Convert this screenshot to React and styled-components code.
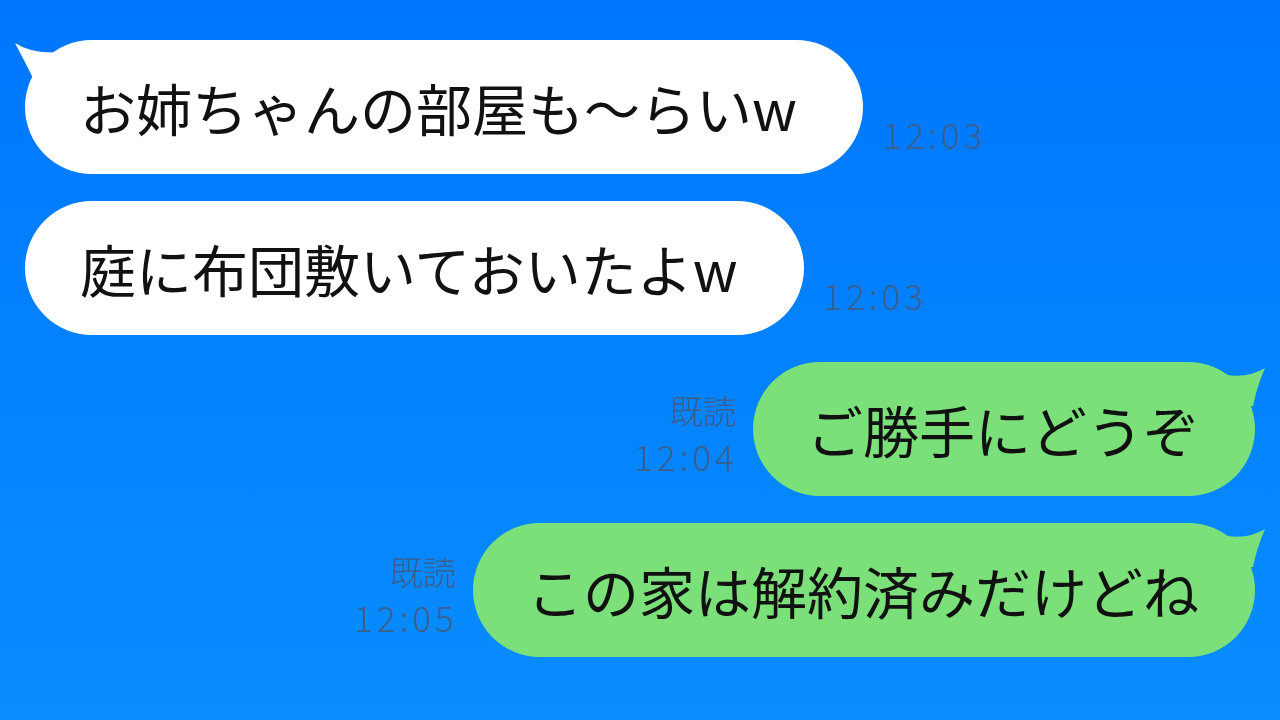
import styled, { createGlobalStyle } from "styled-components";

const GlobalStyle = createGlobalStyle`
  html, body {
    margin: 0;
    padding: 0;
  }
  body {
    width: 1280px;
    height: 720px;
    overflow: hidden;
  }
`;

const Screen = styled.div`
  width: 1280px;
  height: 720px;
  box-sizing: border-box;
  padding: 40px 25px 0;
  display: flex;
  flex-direction: column;
  gap: 27px;
  background: linear-gradient(180deg, #0077fe 0%, #0382ff 50%, #0a8dff 100%);
  font-family: "Noto Sans CJK JP", "Noto Sans", sans-serif;
`;

const Row = styled.div`
  display: flex;
  align-items: flex-end;
  justify-content: ${p => (p.$mine ? "flex-end" : "flex-start")};
  gap: ${p => (p.$mine ? "19px" : "20px")};
`;

const Bubble = styled.div`
  position: relative;
  height: 134px;
  box-sizing: border-box;
  display: flex;
  align-items: center;
  padding: ${p => (p.$mine ? "0 56px 0 54px" : "0 66px 0 55px")};
  border-radius: 67px;
  background: ${p => (p.$mine ? "#7be07a" : "#ffffff")};
  color: #111;
  font-size: 56px;
  line-height: 1;
  white-space: nowrap;
`;

const Tail = styled.svg`
  position: absolute;
  top: 0;
  ${p => (p.$mine ? "right: -10px;" : "left: -10px;")}
  width: 60px;
  height: 50px;
  overflow: visible;
`;

const Meta = styled.div`
  display: flex;
  flex-direction: column;
  align-items: flex-end;
  padding-bottom: 18px;
  color: #3b5f8e;
  font-size: 35px;
  line-height: 45px;
  font-weight: 300;
`;

const Read = styled.span`
  font-size: 33px;
  margin-right: -2px;
`;

const Time = styled.span`
  letter-spacing: 4px;
  margin-right: ${p => (p.$mine ? "-4px" : "0")};
`;

function BubbleTail({ mine, color }) {
  // drawn in a 60x50 box hanging off the top corner of the bubble
  const d = mine
    ? "M60 6 Q44 16 22 13 L18 44 L48 44 Q52 24 60 6 Z"
    : "M0 3 Q18 15 50 12 L52 44 L20 42 Q10 22 0 3 Z";
  return (
    <Tail $mine={mine} viewBox="0 0 60 50">
      <path d={d} fill={color} />
    </Tail>
  );
}

const messages = [
  { mine: false, text: "お姉ちゃんの部屋も〜らいw", time: "12:03", tail: true },
  { mine: false, text: "庭に布団敷いておいたよw", time: "12:03", tail: false },
  { mine: true, text: "ご勝手にどうぞ", time: "12:04", tail: true },
  { mine: true, text: "この家は解約済みだけどね", time: "12:05", tail: true },
];

export default function App() {
  return (
    <>
      <GlobalStyle />
      <Screen>
        {messages.map((m, i) => (
          <Row key={i} $mine={m.mine}>
            {m.mine && (
              <Meta>
                <Read>既読</Read>
                <Time $mine>{m.time}</Time>
              </Meta>
            )}
            <Bubble $mine={m.mine}>
              {m.tail && (
                <BubbleTail mine={m.mine} color={m.mine ? "#7be07a" : "#ffffff"} />
              )}
              {m.text}
            </Bubble>
            {!m.mine && (
              <Meta>
                <Time>{m.time}</Time>
              </Meta>
            )}
          </Row>
        ))}
      </Screen>
    </>
  );
}
